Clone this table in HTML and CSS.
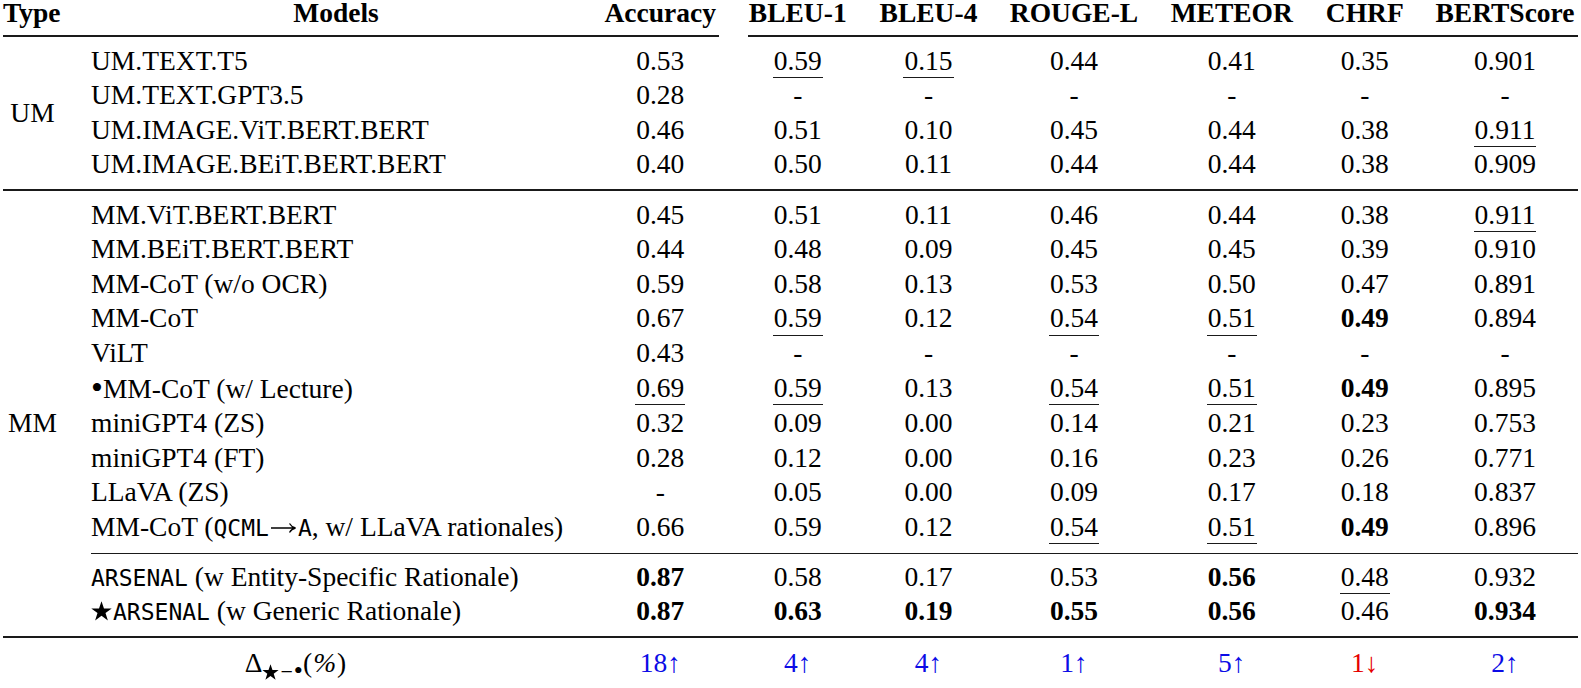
FILE: index.html
```html
<!DOCTYPE html>
<html lang="en">
<head>
<meta charset="utf-8">
<title>Results table</title>
<link rel="stylesheet" href="styles.css">
</head>
<body>
<div class="tbl">
  <!-- header -->
  <div class="h ty-h">Type</div>
  <div class="h mh">Models</div>
  <div class="h c">Accuracy</div>
  <div class="h c">BLEU-1</div>
  <div class="h c">BLEU-4</div>
  <div class="h c">ROUGE-L</div>
  <div class="h c">METEOR</div>
  <div class="h c">CHRF</div>
  <div class="h c bs">BERTScore</div>

  <div class="rule r-head1"></div>
  <div class="rule r-head2"></div>

  <!-- UM group -->
  <div class="ty um">UM</div>
  <div class="m">UM.TEXT.T5</div>
  <div class="c">0.53</div><div class="c"><span class="u">0.59</span></div><div class="c"><span class="u">0.15</span></div><div class="c">0.44</div><div class="c">0.41</div><div class="c">0.35</div><div class="c bs">0.901</div>

  <div class="m">UM.TEXT.GPT3.5</div>
  <div class="c">0.28</div><div class="c">-</div><div class="c">-</div><div class="c">-</div><div class="c">-</div><div class="c">-</div><div class="c bs">-</div>

  <div class="m">UM.IMAGE.ViT.BERT.BERT</div>
  <div class="c">0.46</div><div class="c">0.51</div><div class="c">0.10</div><div class="c">0.45</div><div class="c">0.44</div><div class="c">0.38</div><div class="c bs"><span class="u">0.911</span></div>

  <div class="m">UM.IMAGE.BEiT.BERT.BERT</div>
  <div class="c">0.40</div><div class="c">0.50</div><div class="c">0.11</div><div class="c">0.44</div><div class="c">0.44</div><div class="c">0.38</div><div class="c bs">0.909</div>

  <div class="rule r-mid"></div>

  <!-- MM group -->
  <div class="ty"></div><div class="m">MM.ViT.BERT.BERT</div>
  <div class="c">0.45</div><div class="c">0.51</div><div class="c">0.11</div><div class="c">0.46</div><div class="c">0.44</div><div class="c">0.38</div><div class="c bs"><span class="u">0.911</span></div>

  <div class="ty"></div><div class="m">MM.BEiT.BERT.BERT</div>
  <div class="c">0.44</div><div class="c">0.48</div><div class="c">0.09</div><div class="c">0.45</div><div class="c">0.45</div><div class="c">0.39</div><div class="c bs">0.910</div>

  <div class="ty"></div><div class="m">MM-CoT (w/o OCR)</div>
  <div class="c">0.59</div><div class="c">0.58</div><div class="c">0.13</div><div class="c">0.53</div><div class="c">0.50</div><div class="c">0.47</div><div class="c bs">0.891</div>

  <div class="ty"></div><div class="m">MM-CoT</div>
  <div class="c">0.67</div><div class="c"><span class="u">0.59</span></div><div class="c">0.12</div><div class="c"><span class="u">0.54</span></div><div class="c"><span class="u">0.51</span></div><div class="c b">0.49</div><div class="c bs">0.894</div>

  <div class="ty"></div><div class="m">ViLT</div>
  <div class="c">0.43</div><div class="c">-</div><div class="c">-</div><div class="c">-</div><div class="c">-</div><div class="c">-</div><div class="c bs">-</div>

  <div class="ty"></div><div class="m"><span class="bul">&bull;</span>MM-CoT (w/ Lecture)</div>
  <div class="c"><span class="u">0.69</span></div><div class="c"><span class="u">0.59</span></div><div class="c">0.13</div><div class="c"><span class="u">0.54</span></div><div class="c"><span class="u">0.51</span></div><div class="c b">0.49</div><div class="c bs">0.895</div>

  <div class="ty">MM</div><div class="m">miniGPT4 (ZS)</div>
  <div class="c">0.32</div><div class="c">0.09</div><div class="c">0.00</div><div class="c">0.14</div><div class="c">0.21</div><div class="c">0.23</div><div class="c bs">0.753</div>

  <div class="ty"></div><div class="m">miniGPT4 (FT)</div>
  <div class="c">0.28</div><div class="c">0.12</div><div class="c">0.00</div><div class="c">0.16</div><div class="c">0.23</div><div class="c">0.26</div><div class="c bs">0.771</div>

  <div class="ty"></div><div class="m">LLaVA (ZS)</div>
  <div class="c">-</div><div class="c">0.05</div><div class="c">0.00</div><div class="c">0.09</div><div class="c">0.17</div><div class="c">0.18</div><div class="c bs">0.837</div>

  <div class="ty"></div><div class="m">MM-CoT (<span class="tt">QCML</span><svg class="arr" viewBox="0 0 27 12" aria-hidden="true"><path d="M1 6 H25 M19.5 1.5 Q21.5 5 25.5 6 Q21.5 7 19.5 10.5" fill="none" stroke="#000" stroke-width="1.3"/></svg><span class="tt">A</span>, w/ LLaVA rationales)</div>
  <div class="c">0.66</div><div class="c">0.59</div><div class="c">0.12</div><div class="c"><span class="u">0.54</span></div><div class="c"><span class="u">0.51</span></div><div class="c b">0.49</div><div class="c bs">0.896</div>

  <div class="rule r-sub"></div>

  <div class="ty"></div><div class="m"><span class="tt">ARSENAL</span> (w Entity-Specific Rationale)</div>
  <div class="c b">0.87</div><div class="c">0.58</div><div class="c">0.17</div><div class="c">0.53</div><div class="c b">0.56</div><div class="c"><span class="u">0.48</span></div><div class="c bs">0.932</div>

  <div class="ty"></div><div class="m"><svg class="star" viewBox="0 0 22 21" aria-hidden="true"><path d="M11 0.3 L13.6 7.9 L21.7 7.9 L15.2 12.7 L17.7 20.6 L11 15.6 L4.3 20.6 L6.8 12.7 L0.3 7.9 L8.4 7.9 Z"/></svg><span class="tt">ARSENAL</span> (w Generic Rationale)</div>
  <div class="c b">0.87</div><div class="c b">0.63</div><div class="c b">0.19</div><div class="c b">0.55</div><div class="c b">0.56</div><div class="c">0.46</div><div class="c bs b">0.934</div>

  <div class="rule r-thick"></div>

  <!-- delta row -->
  <div class="c delta">&Delta;<span class="sub"><svg class="sstar" viewBox="0 0 22 21" aria-hidden="true"><path d="M11 0.3 L13.6 7.9 L21.7 7.9 L15.2 12.7 L17.7 20.6 L11 15.6 L4.3 20.6 L6.8 12.7 L0.3 7.9 L8.4 7.9 Z"/></svg><span class="sminus">&minus;</span><span class="sbul">&bull;</span></span>(<span class="pct">%</span>)</div>
  <div class="c up">18&uarr;</div><div class="c up">4&uarr;</div><div class="c up">4&uarr;</div><div class="c up">1&uarr;</div><div class="c up">5&uarr;</div><div class="c down">1&darr;</div><div class="c bs up">2&uarr;</div>

  <div class="rule r-bottom"></div>
</div>
</body>
</html>
```

FILE: styles.css
```css
html, body {
  margin: 0;
  padding: 0;
  background: #ffffff;
}

.tbl {
  display: grid;
  grid-template-columns: 74px 511px 144.5px 130.5px 131px 160px 155.5px 110.5px 158px;
  width: 1575px;
  margin-left: 3px;
  font-family: "Liberation Serif", "Times New Roman", serif;
  font-size: 27.5px;
  line-height: 34.6px;
  color: #000;
}

.tbl > div {
  white-space: nowrap;
}

.h {
  font-weight: bold;
  line-height: 26px;
}

.ty-h {
  text-align: left;
}

.mh {
  text-align: center;
  padding-left: 23px;
  padding-right: 16px;
}

.c {
  text-align: center;
}

.bs {
  padding-left: 12px;
}

.ty {
  text-align: center;
  padding-right: 15px;
}

.um {
  grid-row: span 4;
  align-self: center;
}

.m {
  padding-left: 14px;
}

.b {
  font-weight: bold;
}

.u {
  border-bottom: 1.4px solid #1a1a1a;
  padding: 0 1px 1.5px;
}

.tt {
  font-family: "DejaVu Sans Mono", monospace;
  font-size: 23px;
  line-height: 1;
}

.bul {
  font-size: 34px;
  line-height: 1;
  vertical-align: -1px;
}

.arr {
  width: 27px;
  height: 12px;
  margin: 0 1px;
  vertical-align: 2px;
}

.star {
  width: 21px;
  height: 20px;
  vertical-align: -1px;
  margin-right: 1px;
  fill: #000;
}

.sstar {
  width: 17px;
  height: 16px;
  vertical-align: -1px;
  fill: #000;
}

.sub {
  font-size: 22px;
  line-height: 1;
  vertical-align: -7px;
}

.sminus {
  margin: 0 1px;
}

.sbul {
  font-size: 26px;
}

.delta {
  grid-column: span 2;
}

.pct {
  font-style: italic;
  padding: 0 1px;
}

.up {
  color: #0c0ce6;
}

.down {
  color: #e60000;
}

.rule {
  background: #1a1a1a;
  height: 1.5px;
  align-self: start;
}

.r-head1 {
  grid-column: span 3;
  margin: 9px 13.5px 7.2px 0;
}

.r-head2 {
  grid-column: span 6;
  margin: 9px 0 7.2px 15.5px;
}

.r-mid {
  grid-column: 1 / -1;
  height: 2.4px;
  margin: 7px 0 6.2px;
}

.r-sub {
  grid-column: 1 / -1;
  height: 1.4px;
  margin: 8px 0 5.6px 88px;
}

.r-thick {
  grid-column: 1 / -1;
  height: 2.4px;
  margin: 7.3px 0 7.1px;
}

.r-bottom {
  grid-column: 1 / -1;
  height: 2.4px;
  margin: 6px 0 0;
}
```
